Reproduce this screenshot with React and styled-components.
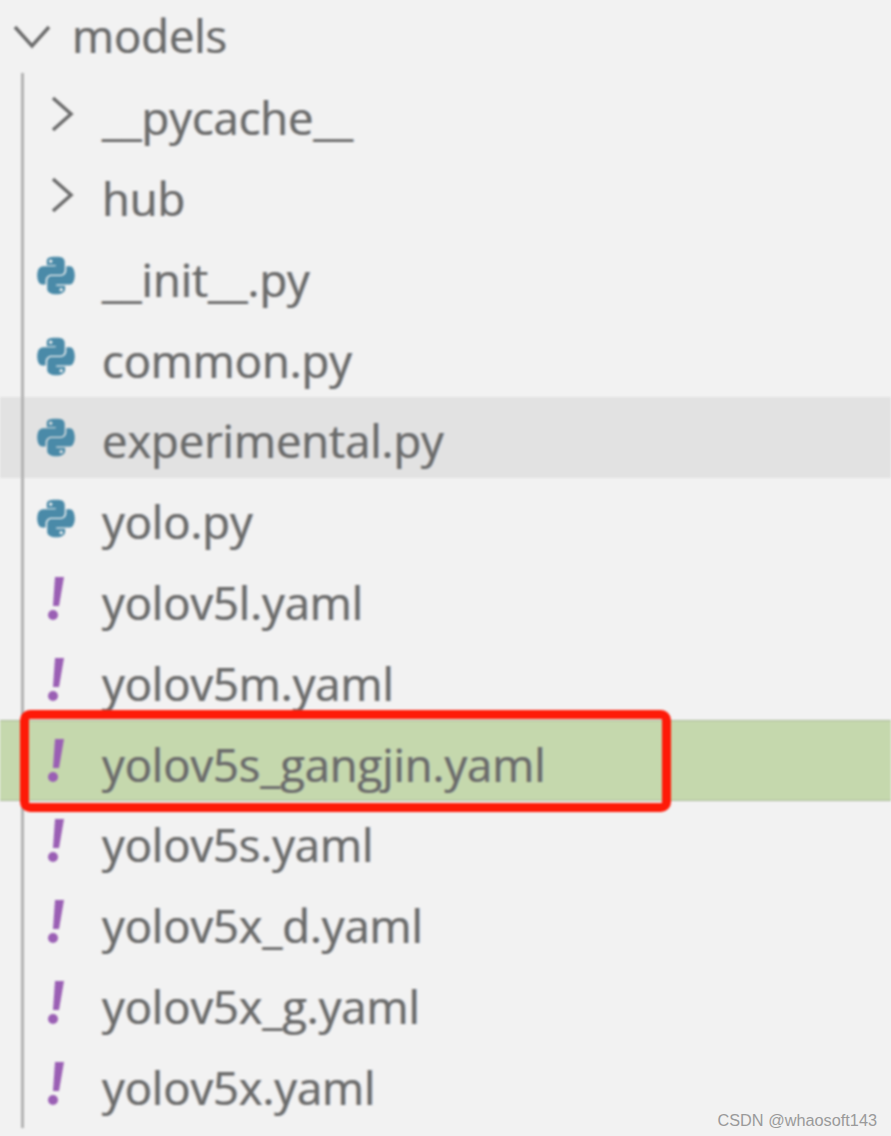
import styled, { createGlobalStyle } from 'styled-components'
import { FaPython } from 'react-icons/fa'

const GlobalStyle = createGlobalStyle`
  html, body {
    margin: 0;
    height: 100%;
    overflow: hidden;
    background: #f2f2f2;
  }
`

const Page = styled.div`
  position: relative;
  width: 891px;
  height: 1136px;
  overflow: hidden;
  background: #f2f2f2;
`

const Tree = styled.div`
  position: relative;
  display: flex;
  flex-direction: column;
  filter: blur(0.8px);
`

const Row = styled.div`
  position: relative;
  box-sizing: border-box;
  display: flex;
  align-items: center;
  gap: ${props => props.$head ? 20 : 26}px;
  flex: none;
  height: ${props => props.$head ? 73.8 : 80.8}px;
  padding-left: ${props => props.$head ? 12 : 36}px;
  padding-bottom: ${props => props.$head ? 3 : 0}px;
  font-family: 'Open Sans', sans-serif;
  font-size: 45.5px;
  letter-spacing: -0.15px;
  color: #6a6a6a;
  text-shadow: -1px 0 rgba(190, 125, 60, 0.4), 1px 0 rgba(70, 140, 220, 0.4);
  background: ${props => props.$hover ? '#e2e2e2' : props.$selected ? '#c5d8ad' : 'transparent'};
  ${props => props.$selected && 'box-shadow: inset 0 1px #a9b99a, inset 0 -1px #a9b99a;'}
`

const IconSlot = styled.span`
  display: flex;
  justify-content: center;
  width: 40px;
`

const Chevron = styled.svg`
  width: 36px;
  height: 36px;
  fill: none;
  stroke: #6b6b6b;
  stroke-width: 3.5;
  overflow: visible;
`

const Label = styled.span`
  padding-top: ${props => props.$head ? 0 : 6}px;
  white-space: pre;
`

const Guide = styled.div`
  position: absolute;
  z-index: 1;
  left: 21px;
  top: 73px;
  width: 2.5px;
  height: 1055px;
  background: #b2b2b2;
`

const Highlight = styled.div`
  position: absolute;
  z-index: 2;
  left: 20px;
  top: -10px;
  width: 651px;
  height: 102px;
  box-sizing: border-box;
  border: 9px solid #fe1a08;
  border-radius: 10px;
`

const Watermark = styled.div`
  position: absolute;
  right: 14px;
  bottom: 6px;
  font-family: 'Liberation Sans', sans-serif;
  font-size: 16.3px;
  color: #9a9a9a;
`

const YamlIcon = () => (
  <svg width="20" height="44" viewBox="0 0 20 44">
    <path d="M9 0h9L13 29H7z" fill="#9a5fb4" />
    <circle cx="7" cy="38" r="5" fill="#9a5fb4" />
  </svg>
)

const files = [
  { name: 'models', kind: 'open' },
  { name: '__pycache__', kind: 'closed' },
  { name: 'hub', kind: 'closed' },
  { name: '__init__.py', kind: 'py' },
  { name: 'common.py', kind: 'py' },
  { name: 'experimental.py', kind: 'py', hover: true },
  { name: 'yolo.py', kind: 'py' },
  { name: 'yolov5l.yaml', kind: 'yaml' },
  { name: 'yolov5m.yaml', kind: 'yaml' },
  { name: 'yolov5s_gangjin.yaml', kind: 'yaml', selected: true },
  { name: 'yolov5s.yaml', kind: 'yaml' },
  { name: 'yolov5x_d.yaml', kind: 'yaml' },
  { name: 'yolov5x_g.yaml', kind: 'yaml' },
  { name: 'yolov5x.yaml', kind: 'yaml' }
]

const FileIcon = ({ kind }) => {
  if (kind === 'open') {
    return <Chevron viewBox="0 0 36 36"><path d="M1 10l17 19L35 10" /></Chevron>
  }
  if (kind === 'closed') {
    return <Chevron viewBox="0 0 36 36"><path d="M15 2l18 16-18 16" /></Chevron>
  }
  if (kind === 'py') return <FaPython size={43} color="#4a8aa8" />
  return <YamlIcon />
}

const App = () => (
  <Page>
    <GlobalStyle />
    <Tree>
      <Guide />
      {files.map(file => {
        const head = file.kind === 'open'
        return (
          <Row key={file.name} $head={head} $hover={file.hover} $selected={file.selected}>
            <IconSlot><FileIcon kind={file.kind} /></IconSlot>
            <Label $head={head}>{file.name}</Label>
            {file.selected && <Highlight />}
          </Row>
        )
      })}
    </Tree>
    <Watermark>CSDN @whaosoft143</Watermark>
  </Page>
)

export default App
